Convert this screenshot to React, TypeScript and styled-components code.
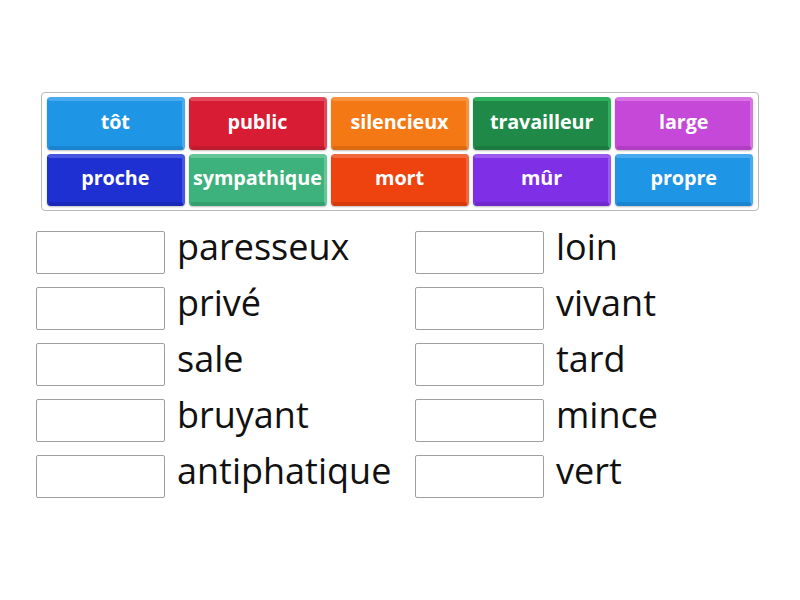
import React from "react";
import styled, { createGlobalStyle } from "styled-components";

const Global = createGlobalStyle`
  html, body { margin: 0; padding: 0; background: #fff; }
  body { font-family: "Open Sans", "Liberation Sans", sans-serif; }
`;

const Page = styled.div`
  width: 800px;
  height: 600px;
  box-sizing: border-box;
  padding: 92px 0 0 36px;
  display: flex;
  flex-direction: column;
`;

const Bank = styled.div`
  margin-left: 5px;
  width: 718px;
  box-sizing: border-box;
  border: 1px solid #b8b8b8;
  border-radius: 4px;
  padding: 4px 5px 4px 5px;
  display: grid;
  grid-template-columns: repeat(5, 1fr);
  gap: 4px 4.5px;
`;

const Tile = styled.div<{ $bg: string; $light: string; $dark: string }>`
  height: 52.5px;
  box-sizing: border-box;
  border-radius: 4px;
  background: ${(p) => p.$bg};
  border-top: 4px solid ${(p) => p.$light};
  border-right: 3px solid ${(p) => p.$light};
  border-left: 2px solid ${(p) => p.$bg};
  border-bottom: 4px solid ${(p) => p.$dark};
  box-shadow: 0 1px 2px rgba(0, 0, 0, 0.25);
  padding-bottom: 4px;
  display: flex;
  align-items: center;
  justify-content: center;
  color: #fff;
  font-weight: 700;
  font-size: 19.8px;
  white-space: nowrap;
  letter-spacing: -0.1px;
`;

const Answers = styled.div`
  margin-top: 20px;
  display: grid;
  grid-template-columns: 379px 379px;
`;

const Column = styled.div`
  display: flex;
  flex-direction: column;
  gap: 13px;
`;

const Row = styled.div`
  display: flex;
  align-items: center;
  gap: 12px;
  height: 43px;
`;

const Slot = styled.div`
  width: 129px;
  height: 43px;
  box-sizing: border-box;
  border: 1px solid #a0a0a0;
  border-radius: 2px;
  background: #fff;
  flex: none;
`;

const Word = styled.span`
  font-size: 36px;
  color: #111;
  line-height: 1;
  margin-top: -11px;
`;

const tiles = [
  { t: "tôt", bg: "#1f95e6", light: "#4aaaf0", dark: "#1a84d0" },
  { t: "public", bg: "#d81c34", light: "#e24a5c", dark: "#c01a2e" },
  { t: "silencieux", bg: "#f47814", light: "#f7923e", dark: "#dc6a10" },
  { t: "travailleur", bg: "#1f8a48", light: "#2fb05c", dark: "#1b7a40" },
  { t: "large", bg: "#c648d8", light: "#d574e2", dark: "#b23ec4" },
  { t: "proche", bg: "#1f30d2", light: "#4656e0", dark: "#1a28b8" },
  { t: "sympathique", bg: "#3db27c", light: "#66c698", dark: "#34a06e" },
  { t: "mort", bg: "#ee430f", light: "#f2683e", dark: "#d63a0c" },
  { t: "mûr", bg: "#7f2fe6", light: "#9a5aee", dark: "#7028d0" },
  { t: "propre", bg: "#1f95e6", light: "#4aaaf0", dark: "#1a84d0" },
];

const left = ["paresseux", "privé", "sale", "bruyant", "antiphatique"];
const right = ["loin", "vivant", "tard", "mince", "vert"];

export default function App() {
  return (
    <>
      <Global />
      <Page>
        <Bank>
          {tiles.map((x) => (
            <Tile key={x.t} $bg={x.bg} $light={x.light} $dark={x.dark}>
              {x.t}
            </Tile>
          ))}
        </Bank>
        <Answers>
          <Column>
            {left.map((w) => (
              <Row key={w}>
                <Slot />
                <Word>{w}</Word>
              </Row>
            ))}
          </Column>
          <Column>
            {right.map((w) => (
              <Row key={w}>
                <Slot />
                <Word>{w}</Word>
              </Row>
            ))}
          </Column>
        </Answers>
      </Page>
    </>
  );
}
